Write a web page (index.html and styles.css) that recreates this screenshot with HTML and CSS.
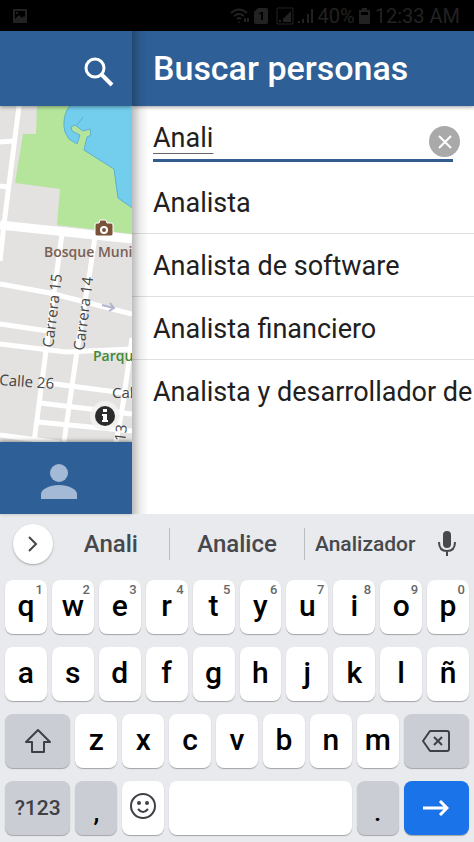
FILE: index.html
```
<!DOCTYPE html>
<html lang="es">
<head>
  <meta charset="UTF-8">
  <meta name="viewport" content="width=device-width, initial-scale=1">
  <title>Buscar personas</title>
  <link rel="stylesheet" href="styles.css">
</head>
<body>

  <div class="status-bar">
    <svg class="status-picture" width="16" height="16" viewBox="0 0 16 16"><path fill="currentColor" fill-rule="evenodd" d="M1 1h14v14H1zM3 3v8l4-4 3 3 2-2 1 1V3zM4 4h2v2H4z"/></svg>
    <svg width="20" height="16" viewBox="0 0 20 16" fill="none" stroke="currentColor" stroke-width="2"><path d="M1 5q8-7 16 0M4 8q5-4 10 0M7 11q2-2 4 0"/><path d="M9 14v1M15 10v4M18 10v4"/></svg>
    <svg width="14" height="16" viewBox="0 0 14 16"><path fill="currentColor" fill-rule="evenodd" d="M4 0h8q2 0 2 2v12q0 2-2 2H2q-2 0-2-2V4zM5 5v1h2v6h2V4H7z"/></svg>
    <svg class="status-sim" width="18" height="18" viewBox="0 0 18 18"><path fill="none" stroke="currentColor" d="M1 1h16v16H1z"/><path fill="currentColor" d="M15 4v11H7v-3zM3 13h2v2H3z"/></svg>
    <svg width="16" height="16" viewBox="0 0 16 16" stroke="currentColor" stroke-width="2"><path d="M1 13v2M5 11v4M10 6v9M14 1v14"/></svg>
    <span class="status-battery">40%</span>
    <svg width="11" height="16" viewBox="0 0 11 16"><path fill="currentColor" fill-rule="evenodd" d="M3 0h5v2h3v14H0V2h3zM2 4v3h7V4z"/></svg>
    <span class="status-time">12:33 AM</span>
  </div>

  <main class="app">
    <section class="map-pane">
      <header class="bar map-bar">
        <button class="icon-btn" aria-label="Buscar">
          <svg width="32" height="32" viewBox="0 0 32 32" fill="none" stroke="#fff"><circle cx="12" cy="12" r="9" stroke-width="3"/><path stroke-width="4" d="M18 18l11 11"/></svg>
        </button>
      </header>

      <svg class="map" viewBox="0 0 132 336" preserveAspectRatio="xMinYMin slice">
        <rect width="132" height="336" fill="#e3e2e0"/>
        <path fill="#b5e59b" d="M37 0L36 28H23L15 77L60 83L57 119L132 128V0z"/>
        <path fill="#73ceee" stroke="#5bb0d0" d="M70 0L67 4Q62 15 65 26L69 33L77 38L80 29L72 25L71 21L75 19L83 25L90 23L91 29L87 31L84 44L114 63L118 92L134 103V-1H70z"/>
        <path fill="none" stroke="#5bb0d0" d="M83 11l-6 8"/>
        <!-- streets -->
        <g fill="none" stroke="#fff" stroke-width="5">
          <path d="M19 0L4 118L0 155"/>
          <path d="M0 36L14 35M0 80L8 81"/>
          <path stroke-width="9" d="M0 119L132 133"/>
          <path d="M62 128L46 245L34 336"/>
          <path d="M95 131L90 165L77 245L64 336"/>
          <path d="M0 178L50 187L132 208"/>
          <path d="M0 218L48 225"/>
          <path d="M0 238L66 246L132 243"/>
          <path d="M40 276L132 288"/>
          <path d="M40 297L132 308"/>
          <path d="M38 316L132 325"/>
          <path d="M0 329L60 337"/>
          <path d="M132 232L123 298L116 336"/>
        </g>
        <path fill="none" stroke="#b3b3d1" stroke-width="2" d="M102 199l12 3M110 197l4 5l-5 3"/>
        <path fill="#7a523a" stroke="#fff" d="M95 119q0-2 2-2h2l1-3h6l1 3h4q2 0 2 2v9q0 2-2 2H97q-2 0-2-2z"/>
        <circle cx="104" cy="124" r="3" fill="none" stroke="#fff" stroke-width="2"/>
        <g class="map-labels">
          <text class="poi" x="44" y="151">Bosque Muni</text>
          <text transform="translate(53 242) rotate(-83)">Carrera 15</text>
          <text transform="translate(84 245) rotate(-83)">Carrera 14</text>
          <text class="park" x="93" y="255">Parqu</text>
          <text transform="translate(-1 279) rotate(4)">Calle 26</text>
          <text x="112" y="292">Cal</text>
          <text transform="translate(125 336) rotate(-83)">13</text>
        </g>
        <circle cx="105" cy="310" r="15" fill="#f2f2f1" fill-opacity=".8"/>
        <circle cx="105" cy="310" r="10" fill="#2b2b2b"/>
        <path fill="#fff" d="M103 303h4v3h-4zM102 308h5v6h1v2h-6v-2h1v-4h-1z"/>
      </svg>

      <nav class="bottom-nav">
        <button class="icon-btn" aria-label="Perfil">
          <svg width="36" height="36" viewBox="0 0 36 36" fill="#a3b9d6"><circle cx="18" cy="9" r="9"/><path d="M0 35v-5c0-5 9-9 18-9s18 4 18 9v5z"/></svg>
        </button>
      </nav>
    </section>

    <section class="drawer">
      <header class="bar">
        <h1>Buscar personas</h1>
      </header>
      <form class="search">
        <input class="search-input" type="text" value="Anali" aria-label="Buscar personas" spellcheck="false" autocomplete="off">
        <button class="clear-btn" type="button" aria-label="Borrar">
          <svg width="14" height="14" viewBox="0 0 14 14" stroke="#fff" stroke-width="2"><path d="M1 1l12 12M13 1L1 13"/></svg>
        </button>
      </form>
      <ul class="results">
        <li><a href="#">Analista</a></li>
        <li><a href="#">Analista de software</a></li>
        <li><a href="#">Analista financiero</a></li>
        <li><a href="#">Analista y desarrollador de</a></li>
      </ul>
    </section>
  </main>

  <section class="keyboard">
    <div class="suggestions">
      <button class="expand-btn" aria-label="Más">
        <svg width="10" height="16" viewBox="0 0 10 16" fill="none" stroke="#444548" stroke-width="2"><path d="M1 1l7 7l-7 7"/></svg>
      </button>
      <button class="word">Anali</button>
      <button class="word word-main">Analice</button>
      <button class="word word-long">Analizador</button>
      <button class="mic-btn" aria-label="Voz">
        <svg width="20" height="26" viewBox="0 0 20 26"><rect x="6" y="0" width="8" height="17" rx="4" fill="#47484c"/><path fill="none" stroke="#47484c" stroke-width="2" d="M2 11q0 9 8 9t8-9M10 20v5"/></svg>
      </button>
    </div>

    <div class="keys">
      <button class="key">q<span class="hint">1</span></button>
      <button class="key">w<span class="hint">2</span></button>
      <button class="key">e<span class="hint">3</span></button>
      <button class="key">r<span class="hint">4</span></button>
      <button class="key">t<span class="hint">5</span></button>
      <button class="key">y<span class="hint">6</span></button>
      <button class="key">u<span class="hint">7</span></button>
      <button class="key">i<span class="hint">8</span></button>
      <button class="key">o<span class="hint">9</span></button>
      <button class="key">p<span class="hint">0</span></button>

      <button class="key">a</button>
      <button class="key">s</button>
      <button class="key">d</button>
      <button class="key">f</button>
      <button class="key">g</button>
      <button class="key">h</button>
      <button class="key">j</button>
      <button class="key">k</button>
      <button class="key">l</button>
      <button class="key">ñ</button>

      <button class="key key-wide key-gray" aria-label="Mayúsculas">
        <svg width="26" height="25" viewBox="0 0 26 25" fill="none" stroke="#3e4045" stroke-width="2" stroke-linejoin="round"><path d="M13 1L25 13H19V23H7V13H1z"/></svg>
      </button>
      <button class="key">z</button>
      <button class="key">x</button>
      <button class="key">c</button>
      <button class="key">v</button>
      <button class="key">b</button>
      <button class="key">n</button>
      <button class="key">m</button>
      <button class="key key-wide key-gray" aria-label="Retroceso">
        <svg width="28" height="22" viewBox="0 0 28 22" fill="none" stroke="#3e4045" stroke-width="2" stroke-linejoin="round"><path d="M8 1H25q2 0 2 2V19q0 2-2 2H8L1 11z"/><path d="M12 7l8 8M20 7l-8 8"/></svg>
      </button>

      <button class="key key-wide key-gray key-symbols">?123</button>
      <button class="key key-gray key-punct">,</button>
      <button class="key" aria-label="Emoji">
        <svg width="26" height="26" viewBox="0 0 26 26" fill="none" stroke="#3e4045" stroke-width="2"><circle cx="13" cy="13" r="12"/><path d="M8 16q5 6 10 0"/><circle cx="9" cy="10" r="1" fill="#3e4045"/><circle cx="17" cy="10" r="1" fill="#3e4045"/></svg>
      </button>
      <button class="key key-space" aria-label="Espacio"></button>
      <button class="key key-gray key-punct">.</button>
      <button class="key key-wide key-enter" aria-label="Siguiente">
        <svg width="26" height="16" viewBox="0 0 26 16" fill="none" stroke="#fff" stroke-width="3"><path d="M0 8H24M17 1l7 7l-7 7"/></svg>
      </button>
    </div>
  </section>

</body>
</html>
```
FILE: styles.css
```
* {
  box-sizing: border-box;
}
body {
  display: flex;
  flex-direction: column;
  min-height: 100vh;
  margin: 0;
  overflow-x: hidden;
  font-family: Roboto, sans-serif;
  background-color: white;
}
button {
  padding: 0;
  border: none;
  background: none;
  font-family: inherit;
  cursor: pointer;
}
svg {
  display: block;
}

/* Status bar */
.status-bar {
  display: flex;
  align-items: center;
  gap: 4px;
  height: 31px;
  padding: 0 14px 0 12px;
  background-color: black;
  color: #222;
  font-size: 20px;
}
.status-picture {
  margin-right: auto;
}
.status-sim {
  margin-left: 4px;
}
.status-time {
  margin-left: 1px;
}

/* App */
.app {
  display: grid;
  grid-template-columns: 132px 1fr;
  flex: 1;
}
.bar {
  position: relative;
  display: flex;
  align-items: center;
  height: 75px;
  padding: 0 21px 2px;
  background-color: #2e6097;
  box-shadow: 0 1px 4px rgba(0,0,0,0.4);
}
.map-pane {
  display: flex;
  flex-direction: column;
  min-width: 0;
}
.map-bar {
  justify-content: flex-end;
  padding: 6px 17px 0;
}
.map {
  flex: 1;
  width: 100%;
}
.map-labels {
  font-family: "Open Sans", sans-serif;
  font-size: 15px;
  fill: #444;
}
.poi {
  font-size: 14px;
  font-weight: 600;
  fill: #7a6054;
}
.park {
  font-size: 14px;
  font-weight: 600;
  fill: #3f8a35;
}
.bottom-nav {
  position: relative;
  display: flex;
  align-items: center;
  justify-content: center;
  height: 72px;
  padding-top: 8px;
  padding-right: 14px;
  background-color: #2e6097;
  box-shadow: 0 -1px 4px rgba(0,0,0,0.4);
}

/* Search drawer */
.drawer {
  position: relative;
  min-width: 0;
  overflow: hidden;
  background-color: white;
}
.drawer::before {
  content: "";
  position: absolute;
  z-index: 1;
  top: 0;
  bottom: 0;
  left: 0;
  width: 16px;
  background: linear-gradient(to right, rgba(0,0,0,0.26), rgba(0,0,0,0.08) 50%, rgba(0,0,0,0));
}
h1 {
  margin: 0;
  color: white;
  font-size: 34px;
  font-weight: 500;
}
.search {
  position: relative;
  height: 65px;
  padding: 12px 21px 0;
}
.search-input {
  display: block;
  width: 100%;
  height: 44px;
  padding: 0 32px 1px 0;
  border: none;
  border-bottom: 3px solid #335c8e;
  outline: none;
  background: none;
  color: #202020;
  font-family: inherit;
  font-size: 27px;
  text-decoration: underline 1px #666;
  text-underline-offset: 6px;
}
.clear-btn {
  position: absolute;
  top: 20px;
  right: 14px;
  display: flex;
  align-items: center;
  justify-content: center;
  width: 31px;
  height: 31px;
  border-radius: 50%;
  background-color: #a9a9a9;
}
.results {
  margin: 0;
  padding: 0;
  list-style: none;
}
.results li {
  border-bottom: 1px solid #e0e0e0;
}
.results li:last-child {
  border-bottom: none;
}
.results a {
  display: block;
  padding-top: 2px;
  padding-left: 21px;
  color: #202020;
  font-size: 27px;
  line-height: 60px;
  text-decoration: none;
  white-space: nowrap;
}

/* Keyboard */
.keyboard {
  padding: 0 5px 10px;
  background-color: #e8eaed;
}
.suggestions {
  display: flex;
  align-items: center;
  height: 60px;
  margin-bottom: 6px;
}
.expand-btn {
  display: flex;
  align-items: center;
  justify-content: center;
  width: 40px;
  height: 40px;
  margin-left: 8px;
  border-radius: 50%;
  background-color: white;
  box-shadow: 0 1px 2px rgba(0,0,0,0.3);
}
.word {
  flex: 115;
  height: 32px;
  color: #47484c;
  font-size: 24px;
  font-weight: 500;
}
.word-main {
  flex: 134;
  border-left: 1px solid #bbbdc1;
  border-right: 1px solid #bbbdc1;
}
.word-long {
  flex: 119;
  font-size: 21px;
}
.mic-btn {
  display: flex;
  justify-content: center;
  width: 44px;
}
.keys {
  display: grid;
  grid-template-columns: repeat(20, 1fr);
  gap: 13px 5px;
}
.key {
  position: relative;
  display: flex;
  align-items: center;
  justify-content: center;
  grid-column: span 2;
  height: 54px;
  padding-bottom: 4px;
  border-radius: 8px;
  background-color: white;
  box-shadow: 0 1px 1px rgba(0,0,0,0.3);
  color: black;
  font-size: 30px;
  font-weight: 500;
}
.hint {
  position: absolute;
  top: 2px;
  right: 4px;
  color: #66676a;
  font-size: 13px;
}
.key-wide {
  grid-column: span 3;
  padding-bottom: 0;
}
.key-space {
  grid-column: span 8;
}
.key-gray {
  background-color: #cbcdd5;
}
.key-symbols {
  color: #3e4045;
  font-size: 21px;
}
.key-punct {
  padding-top: 12px;
  font-size: 26px;
}
.key-enter {
  background-color: #1a73e8;
}
```
